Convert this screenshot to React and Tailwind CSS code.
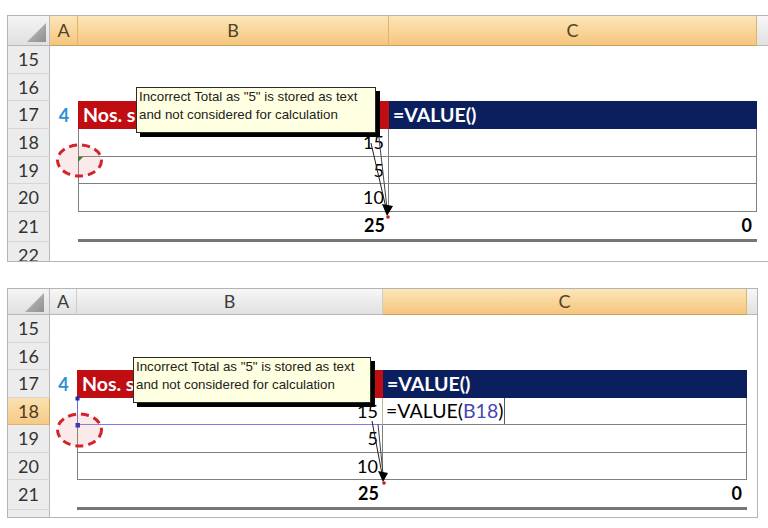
import React from "react";

const ORANGE_H = "bg-gradient-to-b from-[#fce6b9] to-[#f5c57c] border-r border-b border-r-[#e0b46a] border-b-[#c9a060] text-[#4f4225]";
const GRAY_H = "bg-gradient-to-b from-[#f7f7f7] to-[#e1e1e1] border-r border-b border-r-[#cdcdcd] border-b-[#b8b8b8] text-[#3c3c3c]";
const ROWHDR = "bg-[#ececec] border-r border-b border-r-[#b9b9b9] border-b-[#d6d6d6] text-[#333]";
const ROWHDR_ORANGE = "bg-gradient-to-b from-[#fbe1b0] to-[#f6c987] border-r border-b border-r-[#c9a060] border-b-[#e0b46a] text-[#4a3c20]";

const TOP = {
  frame: "w-[761px] h-[247px] border-t border-l border-b border-[#b4b4b4]",
  hdrH: "h-[30px]",
  colW: ["w-[42px]", "w-[28px]", "w-[311px]", "w-[368px]"],
  rowH: ["h-[28px]", "h-[27px]", "h-[28px]", "h-[28px]", "h-[27px]", "h-[28px]", "h-[30px]", "h-[27px]"],
  orangeCols: ["A", "B", "C"],
  edit: false,
  tri: "left-[19px] top-[7px]",
};

const BOTTOM = {
  frame: "w-[751px] h-[230px] border border-[#b4b4b4]",
  hdrH: "h-[26px]",
  colW: ["w-[42px]", "w-[27px]", "w-[306px]", "w-[364px]"],
  rowH: ["h-[28px]", "h-[27px]", "h-[28px]", "h-[27px]", "h-[28px]", "h-[27px]", "h-[30px]", "h-[27px]"],
  orangeCols: ["C"],
  edit: true,
  tri: "left-[17px] top-[4px]",
};

const DATA = { 18: "15", 19: "5", 20: "10" };

function Panel({ c }) {
  const rows = [15, 16, 17, 18, 19, 20, 21, 22];
  return (
    <div className={`relative overflow-hidden flex flex-col bg-white shrink-0 ${c.frame}`}>
      <div className={`flex shrink-0 ${c.hdrH}`}>
        <div className={`${c.colW[0]} relative shrink-0 bg-gradient-to-b from-[#f4f4f4] to-[#e0e0e0] border-r border-b border-r-[#bdbdbd] border-b-[#b8b8b8]`}>
          <svg className={`absolute ${c.tri}`} width="19" height="19" viewBox="0 0 19 19">
            <defs>
              <linearGradient id="tg" x1="0" y1="0" x2="1" y2="1">
                <stop offset="0" stopColor="#c4c4c4" />
                <stop offset="1" stopColor="#8f8f8f" />
              </linearGradient>
            </defs>
            <polygon points="0,19 19,19 19,0" fill="url(#tg)" />
          </svg>
        </div>
        {["A", "B", "C"].map((l, i) => (
          <div
            key={l}
            className={`${c.colW[i + 1]} shrink-0 flex items-center justify-center text-[18px] ${c.orangeCols.includes(l) ? ORANGE_H : GRAY_H}`}
          >
            {l}
          </div>
        ))}
        <div className="flex-1 bg-gradient-to-b from-[#f7f7f7] to-[#e1e1e1] border-b border-b-[#b8b8b8]" />
      </div>
      {rows.map((r, idx) => {
        const h = c.rowH[idx];
        const table = r >= 18 && r <= 20;
        const hdrCls = c.edit && r === 18 ? ROWHDR_ORANGE : ROWHDR;
        let bCls = "";
        let bContent = null;
        let cCls = "";
        let cContent = null;
        let aContent = null;
        if (r === 17) {
          aContent = <span className="text-[#2f8fd3] font-bold">4</span>;
          bCls = "bg-[#c00d12] text-white font-bold text-[19.5px] pl-[5px] justify-start overflow-hidden whitespace-nowrap";
          bContent = "Nos. s";
          cCls = "bg-[#0b1f5e] text-white font-bold text-[19.5px] pl-[4px] justify-start";
          cContent = "=VALUE()";
        } else if (table) {
          if (c.edit && r === 18) {
            bCls = "border-l border-b border-r border-l-[#6a6ad8] border-b-[#7c7ce6] border-r-[#b8b89a] justify-end pr-[4px]";
            cCls = "border-r border-b border-[#7f7f7f] justify-start";
            cContent = (
              <div className="flex items-center h-full pl-[3px] pr-[1px] border-r border-[#5a5a5a] text-[19.5px]">
                <span>=VALUE(</span>
                <span className="text-[#4646b4]">B18</span>
                <span>)</span>
              </div>
            );
          } else {
            bCls = "border-l border-b border-r border-[#7f7f7f] justify-end pr-[4px]";
            cCls = "border-r border-b border-[#7f7f7f]";
          }
          bContent = DATA[r];
        } else if (r === 21) {
          bCls = "border-b-[3px] border-[#767676] justify-end pr-[4px] font-bold";
          bContent = "25";
          cCls = "border-b-[3px] border-[#767676] justify-end pr-[5px] font-bold";
          cContent = "0";
        }
        return (
          <div key={r} className={`flex shrink-0 ${h}`}>
            <div className={`${c.colW[0]} shrink-0 flex items-center justify-center text-[18px] ${hdrCls}`}>{r}</div>
            <div className={`${c.colW[1]} shrink-0 flex items-center justify-center text-[18px]`}>{aContent}</div>
            <div className={`${c.colW[2]} shrink-0 flex items-center text-[18px] text-black ${bCls}`}>{bContent}</div>
            <div className={`${c.colW[3]} shrink-0 flex items-center text-[18px] text-black ${cCls}`}>{cContent}</div>
            <div className="flex-1" />
          </div>
        );
      })}
    </div>
  );
}

function Tip({ pos }) {
  return (
    <div
      className={`absolute ${pos} bg-[#ffffe1] border border-[#2a2a2a] shadow-[4px_4px_0_#000] pl-[2px] font-['Liberation_Sans',Arial,sans-serif] text-[13.3px] leading-[18px] text-[#222] whitespace-nowrap`}
    >
      <div>Incorrect Total as "5" is stored as text</div>
      <div>and not considered for calculation</div>
    </div>
  );
}

export default function App() {
  return (
    <div className="relative w-[768px] h-[528px] bg-white overflow-hidden flex flex-col pt-[15px] pl-[7px] font-['Lato',sans-serif]">
      <Panel c={TOP} />
      <div className="h-[26px] shrink-0" />
      <Panel c={BOTTOM} />

      <Tip pos="left-[136px] top-[87px] w-[240px] h-[46px]" />
      <Tip pos="left-[133px] top-[357px] w-[238px] h-[46px]" />

      <svg className="absolute left-0 top-0 pointer-events-none" width="768" height="528" viewBox="0 0 768 528">
        <line x1="371" y1="143" x2="386" y2="208" stroke="#222" strokeWidth="1" />
        <line x1="379" y1="138" x2="387" y2="208" stroke="#444" strokeWidth="1" />
        <polygon points="382,204 393,206 387,216" fill="#000" />
        <circle cx="388" cy="217" r="1.8" fill="#d01818" />
        <polygon points="78,157 83,157 78,162" fill="#1e7b22" />
        <ellipse cx="79.5" cy="160.5" rx="22" ry="15.5" fill="rgba(226,140,140,0.18)" stroke="#d3232b" strokeWidth="3" strokeDasharray="8 5" />

        <line x1="372" y1="421" x2="382" y2="474" stroke="#222" strokeWidth="1" />
        <line x1="378" y1="424" x2="383" y2="474" stroke="#444" strokeWidth="1" />
        <polygon points="378,471 388,473 383,482" fill="#000" />
        <circle cx="384" cy="483" r="1.8" fill="#d01818" />
        <rect x="75.5" y="396.5" width="4" height="4" fill="#1f2aa8" />
        <rect x="75.5" y="423" width="4.5" height="4.5" fill="#1f2aa8" />
        <ellipse cx="79.5" cy="430" rx="22" ry="16" fill="rgba(226,140,140,0.18)" stroke="#d3232b" strokeWidth="3" strokeDasharray="8 5" />
      </svg>
    </div>
  );
}
